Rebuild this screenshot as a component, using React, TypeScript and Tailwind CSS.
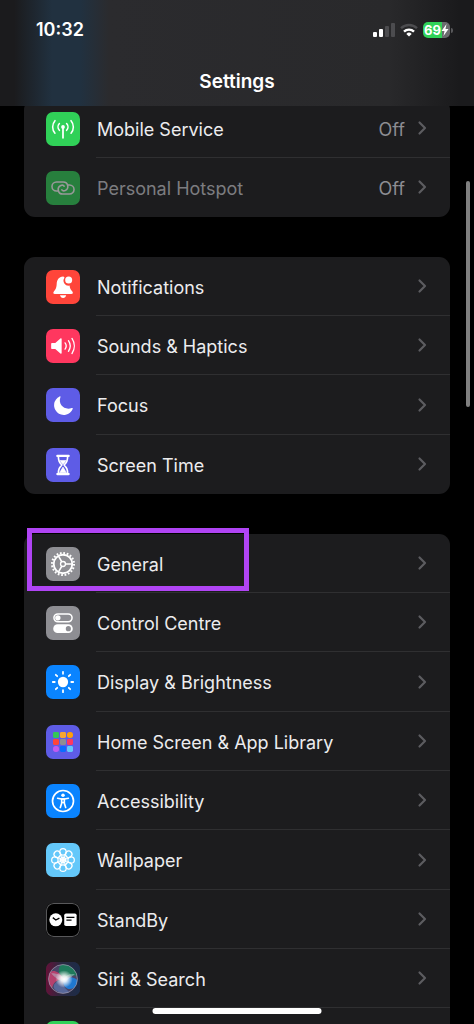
import type { ReactNode } from 'react';

type Item = {
  label: string;
  icon: ReactNode;
  tile: string;
  value?: string;
  disabled?: boolean;
  highlighted?: boolean;
};

const svg = 'size-[34px]';

const AntennaIcon = () => (
  <svg viewBox="0 0 33 33" className={svg} fill="none" stroke="#fff" strokeWidth="1.5" strokeLinecap="round">
    <path d="M16.5 15v10" strokeWidth="1.7" />
    <circle cx="16.5" cy="14.5" r="1.8" fill="#fff" stroke="none" />
    <path d="M13 11.200a4.800 4.800 0 0 0 0 6.600M20 11.200a4.800 4.800 0 0 1 0 6.600" />
    <path d="M8.700 8.400a9.400 9.400 0 0 0 0 12.200M24.300 8.400a9.400 9.400 0 0 1 0 12.200" />
  </svg>
);

const HotspotIcon = () => (
  <svg viewBox="0 0 33 33" className={svg} fill="none" stroke="#fff" strokeWidth="1.5" strokeLinecap="round">
    <path d="M11.500 19.400h-1.300a4.400 4.400 0 0 1 0-8.800h6.600a4.400 4.400 0 0 1 1.800 8.400c-1.500.6-2.800.2-3.200-.8" />
    <path d="M21.500 13.600h1.300a4.400 4.400 0 0 1 0 8.800h-6.600a4.400 4.400 0 0 1-1.800-8.400c1.500-.6 2.800-.2 3.200.8" />
  </svg>
);

const BellIcon = () => (
  <svg viewBox="0 0 33 33" className={svg} fill="#fff">
    <path d="M16.600 6.200c-4.300.3-6 3.400-6.200 7-.2 4.300-.9 5.600-2.600 7.400-1.200 1.300-.8 2.700.9 2.700h15.800c1.700 0 2.100-1.400.9-2.700-1.500-1.600-2.300-2.900-2.500-5.500a4.900 4.900 0 0 1-5-7.600c.2-.5-.5-1.300-1.300-1.300Z" />
    <circle cx="22" cy="9.600" r="3.400" />
    <path d="M13.600 24.600h6c-.3 1.600-1.500 2.600-3 2.600s-2.700-1-3-2.600Z" />
  </svg>
);

const SpeakerIcon = () => (
  <svg viewBox="0 0 33 33" className={svg} fill="none" stroke="#fff" strokeWidth="1.300" strokeLinecap="round">
    <path d="M6 13.500h3l5-4.300c.6-.5 1.200-.2 1.200.5v13.600c0 .7-.6 1-1.200.5l-5-4.300H6c-.6 0-1-.4-1-1v-4c0-.6.400-1 1-1Z" fill="#fff" stroke="none" />
    <path d="M18.500 13.500a5 5 0 0 1 0 6M21.800 11.400a9 9 0 0 1 0 10.200M25.200 9.200a13 13 0 0 1 0 14.600" />
  </svg>
);

const MoonIcon = () => (
  <svg viewBox="0 0 33 33" className={svg} fill="#fff">
    <path d="M13.200 8.200c.6-.3 1.100.1.800.8-2.600 7 4 13 11 10.400.7-.2 1.200.2.900.9A9.400 9.400 0 1 1 13.200 8.200Z" />
  </svg>
);

const HourglassIcon = () => (
  <svg viewBox="0 0 33 33" className={svg} fill="none" stroke="#fff" strokeWidth="1.600" strokeLinejoin="round">
    <path d="M11 7.700h11M11 25.300h11" strokeWidth="2.200" strokeLinecap="round" />
    <path d="M12 8c0 4.500 1 5.800 3.400 8.500C13 19.200 12 20.500 12 25M21 8c0 4.500-1 5.800-3.400 8.500C20 19.200 21 20.500 21 25" />
    <path d="M13.600 12.200h5.800L16.500 16ZM16.500 18.500l3.300 5.500h-6.600Z" fill="#fff" strokeWidth=".6" />
  </svg>
);

const GearIcon = () => (
  <svg viewBox="0 0 33 33" className={svg} fill="none" stroke="#fff">
    <circle cx="16.500" cy="16.500" r="9" strokeWidth="1.800" />
    <circle cx="16.500" cy="16.500" r="10.700" strokeWidth="2" strokeDasharray="1.680 1.680" />
    <circle cx="16.500" cy="16.500" r="2.400" strokeWidth="1.300" />
    <path d="M19 16.500h6.500M15.300 14.300 12 8.700M15.300 18.700 12 24.300" strokeWidth="1.500" />
  </svg>
);

const TogglesIcon = () => (
  <svg viewBox="0 0 33 33" className={svg} fill="#fff">
    <rect x="7.700" y="7.700" width="17.600" height="7.600" rx="3.800" fill="none" stroke="#fff" strokeWidth="1.500" />
    <circle cx="11.500" cy="11.500" r="2.600" />
    <rect x="7" y="17.700" width="19" height="8.600" rx="4.300" />
    <circle cx="21.700" cy="22" r="2.500" fill="#8e8e93" />
  </svg>
);

const SunIcon = () => (
  <svg viewBox="0 0 33 33" className={svg} fill="none" stroke="#fff" strokeWidth="1.700" strokeLinecap="round">
    <circle cx="16.500" cy="16.500" r="5" fill="#fff" stroke="none" />
    <path d="M16.500 6.600v1.900M16.500 24.500v1.900M6.600 16.500h1.900M24.500 16.500h1.900M9.500 9.500l1.400 1.400M22.100 22.100l1.400 1.400M9.500 23.500l1.400-1.400M22.100 10.900l1.400-1.400" />
  </svg>
);

const appColors = ['#34c759', '#f7a531', '#ff9f0a', '#ff453a', '#8e8e93', '#ff375f', '#bf5af2', '#0a6cff', '#64c8fa'];

const AppGridIcon = () => (
  <svg viewBox="0 0 34 34" className={svg}>
    {appColors.map((color, i) => (
      <rect key={color} x={7 + (i % 3) * 7} y={7 + Math.floor(i / 3) * 7} width="6" height="6" rx={i === 2 || i === 6 ? 2.7 : 1.4} fill={color} />
    ))}
  </svg>
);

const AccessibilityIcon = () => (
  <svg viewBox="0 0 33 33" className={svg} fill="none" stroke="#fff" strokeLinecap="round" strokeLinejoin="round">
    <circle cx="16.500" cy="16.500" r="10.200" strokeWidth="1.600" />
    <circle cx="16.500" cy="10.900" r="1.700" fill="#fff" stroke="none" />
    <path d="M11.200 13.800l3.800.8h3l3.800-.8" strokeWidth="1.500" />
    <path d="M15.200 14.600h2.600v4l1.300 4.200M15.200 14.600v4l-1.300 4.200M15.400 18h2.200" strokeWidth="1.600" />
  </svg>
);

const FlowerIcon = () => (
  <svg viewBox="0 0 33 33" className={svg} fill="none" stroke="#fff" strokeWidth="1.200">
    {[0, 45, 90, 135, 180, 225, 270, 315].map((angle) => (
      <g key={angle} transform={`rotate(${angle} 16.5 16.5)`}>
        <circle cx="16.500" cy="8.600" r="3.100" />
        <path d="M15 11.400l1.500 5.100 1.500-5.100" strokeWidth=".9" />
      </g>
    ))}
    <circle cx="16.500" cy="16.500" r="2.500" />
  </svg>
);

const StandByIcon = () => (
  <svg viewBox="0 0 33 33" className={svg} fill="#fff">
    <rect x=".5" y=".5" width="32" height="32" rx="7" fill="#000" stroke="#58585a" />
    <circle cx="9.500" cy="16.300" r="6.300" />
    <path d="M6.600 14.200l2.900 2.300 3.500-1.900" fill="none" stroke="#000" strokeWidth="1.300" />
    <rect x="17.700" y="10.300" width="12" height="12" rx="1.700" />
    <path d="M19.800 14h7.800M19.800 16.600h5" stroke="#000" strokeWidth="1.200" />
  </svg>
);

const SiriIcon = () => (
  <svg viewBox="0 0 33 33" className={svg}>
    <defs>
      <linearGradient id="siri-back" x1="0" x2="1">
        <stop offset="0" stopColor="#641238" />
        <stop offset=".45" stopColor="#2b2941" />
        <stop offset="1" stopColor="#1c2c48" />
      </linearGradient>
      <radialGradient id="siri-glow">
        <stop offset="0" stopColor="#fff" />
        <stop offset=".35" stopColor="#fff" stopOpacity=".85" />
        <stop offset="1" stopColor="#fff" stopOpacity="0" />
      </radialGradient>
      <clipPath id="siri-orb"><circle cx="16.500" cy="16.500" r="14" /></clipPath>
    </defs>
    <rect width="33" height="33" fill="url(#siri-back)" />
    <g clipPath="url(#siri-orb)">
      <rect width="33" height="33" fill="#4b4668" />
      <path d="M16 16C10 10 12 2 18 2c8 0 13 5 14 12-5-2-10 0-16 2Z" fill="#1f7a5c" />
      <path d="M17 16C11 7 5 7 2 12c-1 6 1 11 4 13 1-5 5-8 11-9Z" fill="#b5416d" />
      <path d="M17 17c6-4 11-2 14 1-1 6-5 9-10 8-4-2-5-5-4-9Z" fill="#1f78d1" />
      <path d="M16 17c-6 1-10 5-8 9 4 5 11 5 15 3-5-3-7-7-7-12Z" fill="#58689a" />
      <path d="M5 11c7 0 11 2 12 6 2-4 6-6 11-5-4 3-7 5-10 7-5-1-9-3-13-8Z" fill="#b5d3dc" opacity=".45" />
    </g>
    <circle cx="17.500" cy="16.500" r="8.500" fill="url(#siri-glow)" />
    <circle cx="16.500" cy="16.500" r="14" fill="none" stroke="#a7a1b5" strokeWidth=".8" opacity=".8" />
  </svg>
);

const Chevron = () => (
  <svg viewBox="0 0 10 16" className="h-4 w-[10px] shrink-0" fill="none" stroke="#5c5c60" strokeWidth="2.200" strokeLinecap="round" strokeLinejoin="round">
    <path d="M2.500 2.500L8 8l-5.500 5.500" />
  </svg>
);

const groups: { name: string; items: Item[] }[] = [
  {
    name: 'Connectivity',
    items: [
      { label: 'Mobile Service', icon: <AntennaIcon />, tile: 'bg-[#30d158]', value: 'Off' },
      { label: 'Personal Hotspot', icon: <HotspotIcon />, tile: 'bg-[#30d158]', value: 'Off', disabled: true },
    ],
  },
  {
    name: 'Alerts',
    items: [
      { label: 'Notifications', icon: <BellIcon />, tile: 'bg-[#ff453a]' },
      { label: 'Sounds & Haptics', icon: <SpeakerIcon />, tile: 'bg-[#ff375f]' },
      { label: 'Focus', icon: <MoonIcon />, tile: 'bg-[#5e5ce6]' },
      { label: 'Screen Time', icon: <HourglassIcon />, tile: 'bg-[#5e5ce6]' },
    ],
  },
  {
    name: 'Device',
    items: [
      { label: 'General', icon: <GearIcon />, tile: 'bg-[#8e8e93]', highlighted: true },
      { label: 'Control Centre', icon: <TogglesIcon />, tile: 'bg-[#8e8e93]' },
      { label: 'Display & Brightness', icon: <SunIcon />, tile: 'bg-[#0a84ff]' },
      { label: 'Home Screen & App Library', icon: <AppGridIcon />, tile: 'bg-[#5e5ce6]' },
      { label: 'Accessibility', icon: <AccessibilityIcon />, tile: 'bg-[#0a84ff]' },
      { label: 'Wallpaper', icon: <FlowerIcon />, tile: 'bg-[#64c8fa]' },
      { label: 'StandBy', icon: <StandByIcon />, tile: 'bg-black' },
      { label: 'Siri & Search', icon: <SiriIcon />, tile: 'bg-[#2b2941]' },
      { label: '', icon: <svg viewBox="0 0 33 33" className={svg} />, tile: 'bg-[#30d158]' },
    ],
  },
];

function Row({ item }: { item: Item }) {
  if (!item.label) {
    return (
      <li aria-hidden="true" className="flex h-[59px] items-center pl-[22px]">
        <span className={`rounded-[7px] ${item.tile}`}>{item.icon}</span>
      </li>
    );
  }

  return (
    <li className="group relative h-[59px] nth-[3n]:h-[60px]">
      <button
        type="button"
        disabled={item.disabled}
        className="flex h-full w-full items-center gap-4 pl-[22px] text-left text-[18px] leading-6"
      >
        <span className={`shrink-0 overflow-hidden rounded-[7px] ${item.tile} ${item.disabled ? 'opacity-55' : ''}`}>
          {item.icon}
        </span>
        <span className="flex h-full min-w-0 flex-1 items-center gap-3 border-b border-[#2f2f31] pr-[23px] pl-px group-last:border-transparent">
          <span className={`flex-1 truncate pt-[3px] ${item.disabled ? 'text-[#7c7c80]' : 'text-[#ececee]'}`}>{item.label}</span>
          {item.value && <span className="pt-[3px] text-[#8d8d92]">{item.value}</span>}
          <Chevron />
        </span>
      </button>
      {item.highlighted && (
        <span className="pointer-events-none absolute -top-[6px] left-[3px] h-[63px] w-[222px] border-[5px] border-[#b044f4]" />
      )}
    </li>
  );
}

function StatusIcons() {
  return (
    <div className="flex items-center gap-[5px]">
      <svg viewBox="0 0 22 14" className="h-[14px] w-[22px]" fill="#fff" role="img" aria-label="Signal">
        <rect x="0" y="9" width="4" height="5" rx="1" />
        <rect x="6" y="6" width="4" height="8" rx="1" />
        <rect x="12" y="3" width="4" height="11" rx="1" fill="#4c4c4f" />
        <rect x="18" y="0" width="4" height="14" rx="1" fill="#4c4c4f" />
      </svg>
      <svg viewBox="0 0 18 14" className="h-[14px] w-[18px]" fill="none" strokeWidth="2.400" role="img" aria-label="Wi-Fi">
        <path d="M1 5.200a11.500 11.500 0 0 1 16 0" stroke="#4c4c4f" />
        <path d="M4 8.600a7.200 7.200 0 0 1 10 0" stroke="#fff" />
        <path d="M9 13.600l-2.700-2.700a3.900 3.900 0 0 1 5.400 0Z" fill="#fff" />
      </svg>
      <div className="flex items-center gap-px">
        <div className="flex h-4 w-[27px] items-center justify-center overflow-hidden rounded-[5px] bg-linear-to-r from-[#30d158] from-69% to-[#6b6b6e] to-69% text-[13px] leading-4 font-bold text-white">
          69
          <svg viewBox="0 0 8 12" className="h-3 w-2" fill="#fff">
            <path d="M5.500 0L.5 7h3L2.500 12l5-7h-3Z" />
          </svg>
        </div>
        <span className="h-[5px] w-[2px] rounded-r-full bg-[#59595c]" />
      </div>
    </div>
  );
}

export default function App() {
  return (
    <div className="relative flex h-screen flex-col overflow-hidden bg-black font-['Inter','Liberation_Sans',sans-serif] text-white">
      <header className="z-10 flex h-[106px] shrink-0 flex-col bg-[linear-gradient(90deg,#1b1b1d_3%,#213140_11%,#213140_17%,#2b2b2e_23%,#29292b_82%,#1a1a1c_97%)]">
        <div className="flex h-[60px] items-center justify-between pr-[21px] pl-9">
          <time className="text-[18px] leading-6 font-semibold">10:32</time>
          <StatusIcons />
        </div>
        <h1 className="pt-[10px] text-center text-[19px] leading-6 font-semibold">Settings</h1>
      </header>

      <main className="-mt-[7px] flex min-h-0 flex-1 flex-col gap-10 overflow-hidden px-6">
        {groups.map((group) => (
          <ul key={group.name} aria-label={group.name} className="shrink-0 rounded-[11px] bg-[#1c1c1e]">
            {group.items.map((item) => (
              <Row key={item.label} item={item} />
            ))}
          </ul>
        ))}
      </main>

      <div className="absolute top-[181px] right-1 h-[226px] w-1 rounded-full bg-[#808080]" />
      <div className="absolute bottom-[10px] left-1/2 h-[6px] w-[169px] -translate-x-1/2 rounded-full bg-white" />
    </div>
  );
}
